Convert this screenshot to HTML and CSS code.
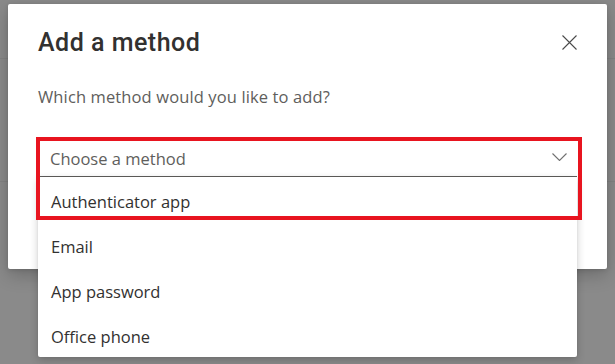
FILE: index.html
```html
<!DOCTYPE html>
<html>
<head>
<meta charset="utf-8">
<link rel="stylesheet" href="styles.css">
</head>
<body>
<div class="page">
  <div class="page-row r1"></div>
  <div class="page-row r2"></div>
  <div class="page-row r3"></div>
</div>
<div class="dialog">
  <div class="head">
    <h1 class="title">Add a method</h1>
    <button class="close" aria-label="Close">
      <svg width="15" height="15" viewBox="0 0 15 15"><path d="M0.5 0.5L14.5 14.5M14.5 0.5L0.5 14.5" stroke="#4a4a4a" stroke-width="1.1" fill="none"/></svg>
    </button>
  </div>
  <p class="sub">Which method would you like to add?</p>
  <div class="select-wrap">
    <div class="select">
      <span class="placeholder">Choose a method</span>
      <svg class="chev" width="15" height="8" viewBox="0 0 15 8"><path d="M0.5 0.5L7.5 7.5L14.5 0.5" stroke="#707070" stroke-width="1.1" fill="none"/></svg>
    </div>
    <ul class="menu">
      <li class="item">Authenticator app</li>
      <li class="item">Email</li>
      <li class="item">App password</li>
      <li class="item">Office phone</li>
    </ul>
  </div>
</div>
<div class="highlight"></div>
</body>
</html>
```
FILE: styles.css
```css
* { box-sizing: border-box; }
html, body { margin: 0; padding: 0; }
body {
  width: 615px;
  height: 364px;
  overflow: hidden;
  background: #8a8a8a;
  font-family: "Open Sans", "Noto Sans", sans-serif;
  position: relative;
}
.page { display: flex; flex-direction: column; }
.page-row { border-bottom: 1px solid #828282; }
.r1 { height: 59px; }
.r2 { height: 123px; }
.r3 { height: 100px; border-bottom: none; }

.dialog {
  position: absolute;
  left: 8px;
  top: 4px;
  width: 599px;
  height: 265px;
  background: #fff;
  border-radius: 2px;
  box-shadow: 0 6px 18px rgba(0,0,0,0.22), 0 1px 4px rgba(0,0,0,0.12);
  padding: 22px 30px 0 30px;
}
.head {
  display: flex;
  justify-content: space-between;
  align-items: flex-start;
}
.title {
  margin: 0;
  font-family: Roboto, "Open Sans", sans-serif;
  font-size: 25px;
  line-height: 34px;
  font-weight: 500;
  color: #323130;
  letter-spacing: 0.5px;
}
.close {
  border: 0;
  background: none;
  padding: 0;
  margin-top: 9px;
  width: 15px;
  height: 15px;
  display: block;
}
.close svg { display: block; }
.sub {
  margin: 26px 0 0 0;
  font-size: 16.5px;
  line-height: 22px;
  color: #605e5c;
  letter-spacing: 0.12px;
}
.select-wrap {
  position: relative;
  margin-top: 31px;
}
.select {
  height: 38px;
  border-bottom: 1px solid #605e5c;
  display: flex;
  align-items: center;
  justify-content: space-between;
  padding: 0 10px 0 12px;
}
.placeholder {
  font-size: 16.5px;
  color: #605e5c;
  letter-spacing: 0;
  padding-top: 2px;
}
.chev { display: block; margin-top: -2px; }
.menu {
  position: absolute;
  left: 0;
  right: 0;
  top: 100%;
  margin: 0;
  padding: 0;
  list-style: none;
  background: #fff;
  border-radius: 0 0 2px 2px;
  box-shadow: 0 3px 8px rgba(0,0,0,0.2), 0 0 2px rgba(0,0,0,0.08);
}
.item {
  height: 45px;
  display: flex;
  align-items: center;
  padding-left: 13px;
  padding-top: 3px;
  font-size: 16.5px;
  color: #323130;
  letter-spacing: 0;
}
.highlight {
  position: absolute;
  left: 36px;
  top: 137px;
  width: 546px;
  height: 83px;
  border: 4px solid #e8141f;
}
```
